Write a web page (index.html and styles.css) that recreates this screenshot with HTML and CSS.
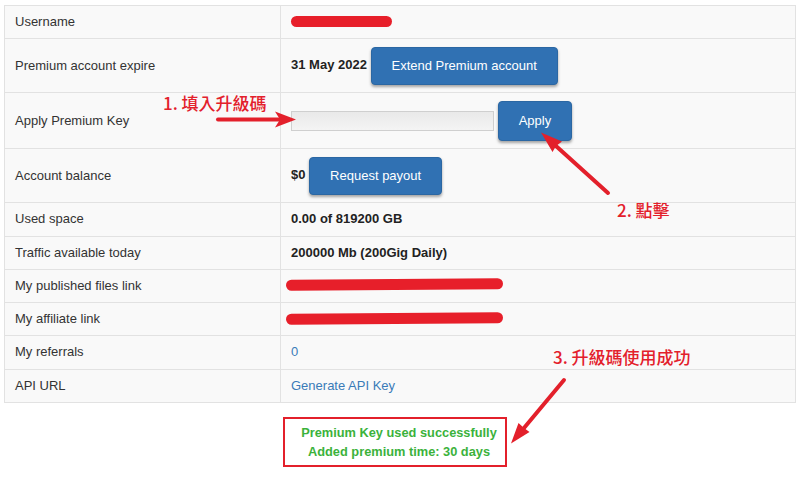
FILE: index.html
```html
<!DOCTYPE html>
<html lang="en">
<head>
<meta charset="utf-8">
<title>My Account</title>
<link rel="stylesheet" href="styles.css">
</head>
<body>
<div class="page">
  <table class="account">
    <colgroup><col class="col-label"><col class="col-value"></colgroup>
    <tr>
      <td class="label">Username</td>
      <td class="value"><span class="redact redact-user"></span></td>
    </tr>
    <tr class="tall">
      <td class="label">Premium account expire</td>
      <td class="value"><strong>31 May 2022</strong> <button class="btn" type="button">Extend Premium account</button></td>
    </tr>
    <tr class="tall">
      <td class="label">Apply Premium Key</td>
      <td class="value"><input class="key-input" type="text"> <button class="btn btn-apply" type="button">Apply</button></td>
    </tr>
    <tr class="tall">
      <td class="label">Account balance</td>
      <td class="value"><strong>$0</strong> <button class="btn" type="button">Request payout</button></td>
    </tr>
    <tr>
      <td class="label">Used space</td>
      <td class="value"><strong>0.00 of 819200 GB</strong></td>
    </tr>
    <tr>
      <td class="label">Traffic available today</td>
      <td class="value"><strong>200000 Mb (200Gig Daily)</strong></td>
    </tr>
    <tr>
      <td class="label">My published files link</td>
      <td class="value"><span class="redact redact-link"></span></td>
    </tr>
    <tr>
      <td class="label">My affiliate link</td>
      <td class="value"><span class="redact redact-link"></span></td>
    </tr>
    <tr>
      <td class="label">My referrals</td>
      <td class="value"><a class="link" href="#">0</a></td>
    </tr>
    <tr>
      <td class="label">API URL</td>
      <td class="value"><a class="link" href="#">Generate API Key</a></td>
    </tr>
  </table>

  <div class="notice">
    <div>Premium Key used successfully</div>
    <div>Added premium time: 30 days</div>
  </div>

  <span class="note note-1">1. 填入升級碼</span>
  <span class="note note-2">2. 點擊</span>
  <span class="note note-3">3. 升級碼使用成功</span>

  <svg class="arrows" width="800" height="482" viewBox="0 0 800 482" aria-hidden="true">
    <g class="arrow">
      <line x1="218" y1="119.5" x2="282" y2="119.5"/>
      <polygon points="296,119.5 275,111.5 280,119.5 275,127.5"/>
    </g>
    <g class="arrow">
      <line x1="608" y1="193" x2="556" y2="146"/>
      <polygon points="541,132.5 562,141.5 556,146 552.5,152"/>
    </g>
    <g class="arrow">
      <line x1="564" y1="380" x2="524" y2="428"/>
      <polygon points="511,443.5 518.5,423 524,428 529.5,432"/>
    </g>
  </svg>
</div>
</body>
</html>
```

FILE: styles.css
```css
html, body {
  margin: 0;
  padding: 0;
  background: #ffffff;
}

body {
  font-family: "Liberation Sans", Arial, sans-serif;
  font-size: 13px;
  color: #333333;
}

.page {
  position: relative;
  width: 800px;
  height: 482px;
  box-sizing: border-box;
  padding: 5px 5px 0 4px;
  overflow: hidden;
}

.account {
  width: 791px;
  border-collapse: collapse;
  table-layout: fixed;
  background: #f9f9f9;
}

.col-label { width: 276px; }
.col-value { width: 515px; }

.account td {
  border: 1px solid #e2e2e2;
  padding: 7px 10px;
  line-height: 18.3px;
  vertical-align: middle;
  white-space: nowrap;
}

.account tr.tall td {
  padding-top: 7.5px;
  padding-bottom: 7.5px;
}

.account strong {
  font-weight: bold;
  color: #222222;
}

.btn {
  display: inline-block;
  vertical-align: middle;
  margin: 0;
  font-family: "Liberation Sans", Arial, sans-serif;
  font-size: 13px;
  line-height: 18px;
  color: #ffffff;
  background: #3071b3;
  border: 1px solid #2b67a3;
  border-radius: 4px;
  padding: 9px 20px;
  box-shadow: 0 2px 3px rgba(0, 0, 0, 0.35);
  cursor: pointer;
}

.btn-apply {
  padding-top: 10px;
  padding-bottom: 10px;
}

.key-input {
  display: inline-block;
  vertical-align: middle;
  box-sizing: border-box;
  width: 203px;
  height: 20px;
  margin: 0;
  padding: 0 4px;
  border: 1px solid #cfcfcf;
  background: linear-gradient(#e9e9e9, #f4f4f4);
}

.link {
  color: #3a7bb8;
  text-decoration: none;
}

.redact {
  display: inline-block;
  vertical-align: middle;
  height: 11px;
  border-radius: 6px;
  background: #e71f2a;
}

.redact-user {
  width: 101px;
  margin-top: -2px;
}

.redact-link {
  width: 217px;
  margin-left: -5px;
  margin-top: -3px;
  transform: rotate(-0.4deg);
}

.notice {
  width: 224px;
  box-sizing: border-box;
  margin: 14px 0 0 279px;
  padding: 4px 4px 4px 12px;
  border: 2px solid #e3202b;
  text-align: center;
  white-space: nowrap;
  color: #3bb23b;
  font-weight: bold;
  font-size: 12.8px;
  line-height: 19px;
}

.note {
  position: absolute;
  font-family: "Noto Sans CJK TC", "Noto Sans CJK SC", sans-serif;
  font-size: 17px;
  font-weight: 500;
  line-height: 18px;
  color: #e3202b;
  white-space: nowrap;
}

.note-1 { left: 163px; top: 94px; }
.note-2 { left: 617px; top: 201px; }
.note-3 { left: 553px; top: 348px; }

.arrows {
  position: absolute;
  left: 0;
  top: 0;
  pointer-events: none;
}

.arrow line {
  stroke: #e3202b;
  stroke-width: 4;
  stroke-linecap: round;
}

.arrow polygon {
  fill: #e3202b;
}
```
